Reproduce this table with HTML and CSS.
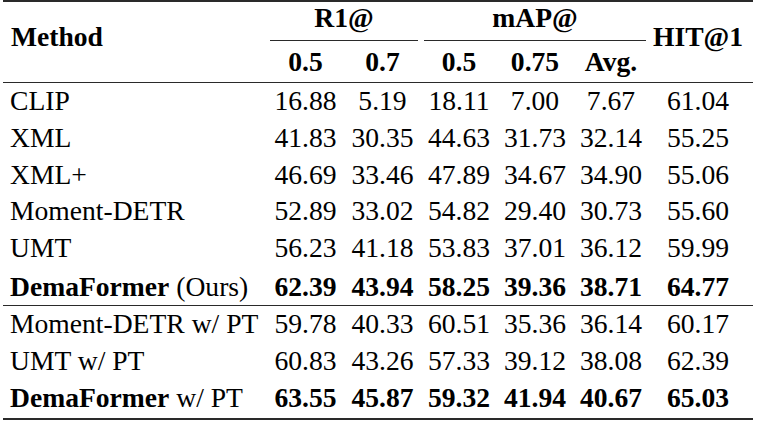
FILE: index.html
```html
<!DOCTYPE html>
<html>
<head>
<meta charset="utf-8">
<link rel="stylesheet" href="styles.css">
</head>
<body>
<table class="results">
  <colgroup>
    <col class="c-method">
    <col class="c-r1">
    <col class="c-r1">
    <col class="c-map">
    <col class="c-map">
    <col class="c-map">
    <col class="c-hit">
  </colgroup>
  <thead>
    <tr class="head-top">
      <th class="method-head" rowspan="2">Method</th>
      <th class="grp" colspan="2"><div class="grp-label">R1@</div></th>
      <th class="grp" colspan="3"><div class="grp-label">mAP@</div></th>
      <th class="hit-head" rowspan="2">HIT@1</th>
    </tr>
    <tr class="head-sub">
      <th>0.5</th>
      <th>0.7</th>
      <th>0.5</th>
      <th>0.75</th>
      <th>Avg.</th>
    </tr>
  </thead>
  <tbody class="main">
    <tr class="first"><td class="m">CLIP</td><td>16.88</td><td>5.19</td><td>18.11</td><td>7.00</td><td>7.67</td><td class="hit">61.04</td></tr>
    <tr><td class="m">XML</td><td>41.83</td><td>30.35</td><td>44.63</td><td>31.73</td><td>32.14</td><td class="hit">55.25</td></tr>
    <tr><td class="m">XML+</td><td>46.69</td><td>33.46</td><td>47.89</td><td>34.67</td><td>34.90</td><td class="hit">55.06</td></tr>
    <tr><td class="m">Moment-DETR</td><td>52.89</td><td>33.02</td><td>54.82</td><td>29.40</td><td>30.73</td><td class="hit">55.60</td></tr>
    <tr><td class="m">UMT</td><td>56.23</td><td>41.18</td><td>53.83</td><td>37.01</td><td>36.12</td><td class="hit">59.99</td></tr>
    <tr class="best last"><td class="m"><b>DemaFormer</b> (Ours)</td><td>62.39</td><td>43.94</td><td>58.25</td><td>39.36</td><td>38.71</td><td class="hit">64.77</td></tr>
  </tbody>
  <tbody class="pt">
    <tr class="first"><td class="m">Moment-DETR w/ PT</td><td>59.78</td><td>40.33</td><td>60.51</td><td>35.36</td><td>36.14</td><td class="hit">60.17</td></tr>
    <tr><td class="m">UMT w/ PT</td><td>60.83</td><td>43.26</td><td>57.33</td><td>39.12</td><td>38.08</td><td class="hit">62.39</td></tr>
    <tr class="best last"><td class="m"><b>DemaFormer</b> w/ PT</td><td>63.55</td><td>45.87</td><td>59.32</td><td>41.94</td><td>40.67</td><td class="hit">65.03</td></tr>
  </tbody>
</table>
</body>
</html>
```

FILE: styles.css
```css
html, body {
  margin: 0;
  padding: 0;
  background: #ffffff;
}

body {
  font-family: "Liberation Serif", "Times New Roman", serif;
  font-size: 27.6px;
  color: #000000;
}

.results {
  border-collapse: collapse;
  table-layout: fixed;
  width: 750px;
  margin-left: 3px;
  border-top: 2px solid #2a2a2a;
  border-bottom: 2px solid #2a2a2a;
}

.c-method { width: 264px; }
.c-r1 { width: 77px; }
.c-map { width: 76px; }
.c-hit { width: 104px; }

th, td {
  padding: 0;
  text-align: center;
  white-space: nowrap;
}

th {
  font-weight: bold;
}

.method-head {
  text-align: left;
  padding-left: 8px;
  vertical-align: middle;
  padding-bottom: 10px;
}

.hit-head {
  vertical-align: middle;
  padding-bottom: 10px;
  padding-right: 6px;
}

.grp {
  vertical-align: bottom;
}

.grp-label {
  line-height: 32px;
  padding-bottom: 6px;
  margin: 0 3px;
  border-bottom: 1px solid #2a2a2a;
}

.head-sub th {
  line-height: 36px;
  padding-top: 3px;
  padding-bottom: 2px;
}

.head-sub {
  border-bottom: 1px solid #2a2a2a;
}

td {
  line-height: 36.8px;
}

td.m {
  text-align: left;
  padding-left: 7px;
}

td.hit {
  padding-right: 6px;
}

.best td {
  font-weight: bold;
}

.best td.m {
  font-weight: normal;
}

.best td.m b {
  font-weight: bold;
}

.main .last {
  border-bottom: 1px solid #2a2a2a;
}

.main .last td {
  line-height: 36px;
  padding-top: 2px;
}

.pt .last td {
  padding-bottom: 2px;
}
```
